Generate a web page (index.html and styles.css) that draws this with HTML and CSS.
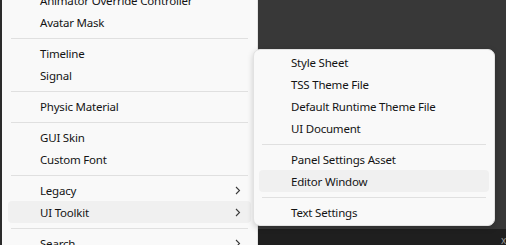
FILE: index.html
```html
<!DOCTYPE html>
<html>
<head>
<meta charset="utf-8">
<link rel="stylesheet" href="styles.css">
</head>
<body>
<div class="screen">
  <div class="main-menu">
    <ul class="list">
      <li class="item"><span>Animator Override Controller</span></li>
      <li class="item"><span>Avatar Mask</span></li>
      <li class="sep"></li>
      <li class="item"><span>Timeline</span></li>
      <li class="item"><span>Signal</span></li>
      <li class="sep"></li>
      <li class="item"><span>Physic Material</span></li>
      <li class="sep"></li>
      <li class="item"><span>GUI Skin</span></li>
      <li class="item"><span>Custom Font</span></li>
      <li class="sep"></li>
      <li class="item"><span>Legacy</span><svg class="chev" width="6" height="9" viewBox="0 0 6 9"><polyline points="1,1 4.5,4.5 1,8" fill="none" stroke="#3a3a3a" stroke-width="1.1"/></svg></li>
      <li class="item active"><span>UI Toolkit</span><svg class="chev" width="6" height="9" viewBox="0 0 6 9"><polyline points="1,1 4.5,4.5 1,8" fill="none" stroke="#3a3a3a" stroke-width="1.1"/></svg></li>
      <li class="sep"></li>
      <li class="item"><span>Search</span><svg class="chev" width="6" height="9" viewBox="0 0 6 9"><polyline points="1,1 4.5,4.5 1,8" fill="none" stroke="#3a3a3a" stroke-width="1.1"/></svg></li>
    </ul>
  </div>
  <div class="sub-menu">
    <ul class="list">
      <li class="item"><span>Style Sheet</span></li>
      <li class="item"><span>TSS Theme File</span></li>
      <li class="item"><span>Default Runtime Theme File</span></li>
      <li class="item"><span>UI Document</span></li>
      <li class="sep"></li>
      <li class="item"><span>Panel Settings Asset</span></li>
      <li class="item active"><span>Editor Window</span></li>
      <li class="sep"></li>
      <li class="item"><span>Text Settings</span></li>
    </ul>
  </div>
  <span class="tab-x">x</span>
</div>
</body>
</html>
```
FILE: styles.css
```css
html, body {
  margin: 0;
  padding: 0;
}
body {
  width: 506px;
  height: 245px;
  overflow: hidden;
  background: linear-gradient(#383838 0, #383838 229px, #1f1f1f 229px);
  font-family: "Noto Sans", "Open Sans", sans-serif;
  font-size: 11.5px;
  letter-spacing: -0.2px;
  color: #141414;
}
.screen {
  position: relative;
  height: 245px;
  display: flex;
  background: linear-gradient(90deg, #2b2b2b 0, #2b2b2b 2px, transparent 2px);
}
.main-menu {
  margin-left: 2px;
  width: 256px;
  height: 245px;
  box-sizing: border-box;
  padding: 0 6px;
  background: #f9f9f9;
  border-right: 1px solid #e4e4e4;
  overflow: hidden;
}
.list {
  margin: 0;
  padding: 0;
  list-style: none;
}
.main-menu .list {
  margin-top: -11px;
}
.item {
  height: 22px;
  line-height: 22px;
  padding-left: 32px;
  padding-right: 10px;
  display: flex;
  align-items: center;
  justify-content: space-between;
  border-radius: 4px;
  white-space: nowrap;
}
.item span {
  padding-top: 2px;
}
.item.active {
  background: #f0f0f0;
}
.chev {
  display: block;
}
.sep {
  height: 1px;
  background: #e0e0e0;
  margin: 5px 3px 3px;
}
.sub-menu {
  position: absolute;
  left: 253px;
  top: 49px;
  width: 242px;
  height: 177px;
  box-sizing: border-box;
  padding: 1px 5px 2px;
  background: #f9f9f9;
  border: 1px solid #e2e2e2;
  border-radius: 7px;
  box-shadow: 0 2px 6px rgba(0, 0, 0, 0.18);
}
.tab-x {
  position: absolute;
  left: 501px;
  top: 233px;
  font-size: 10px;
  color: #9a9a9a;
}
```
